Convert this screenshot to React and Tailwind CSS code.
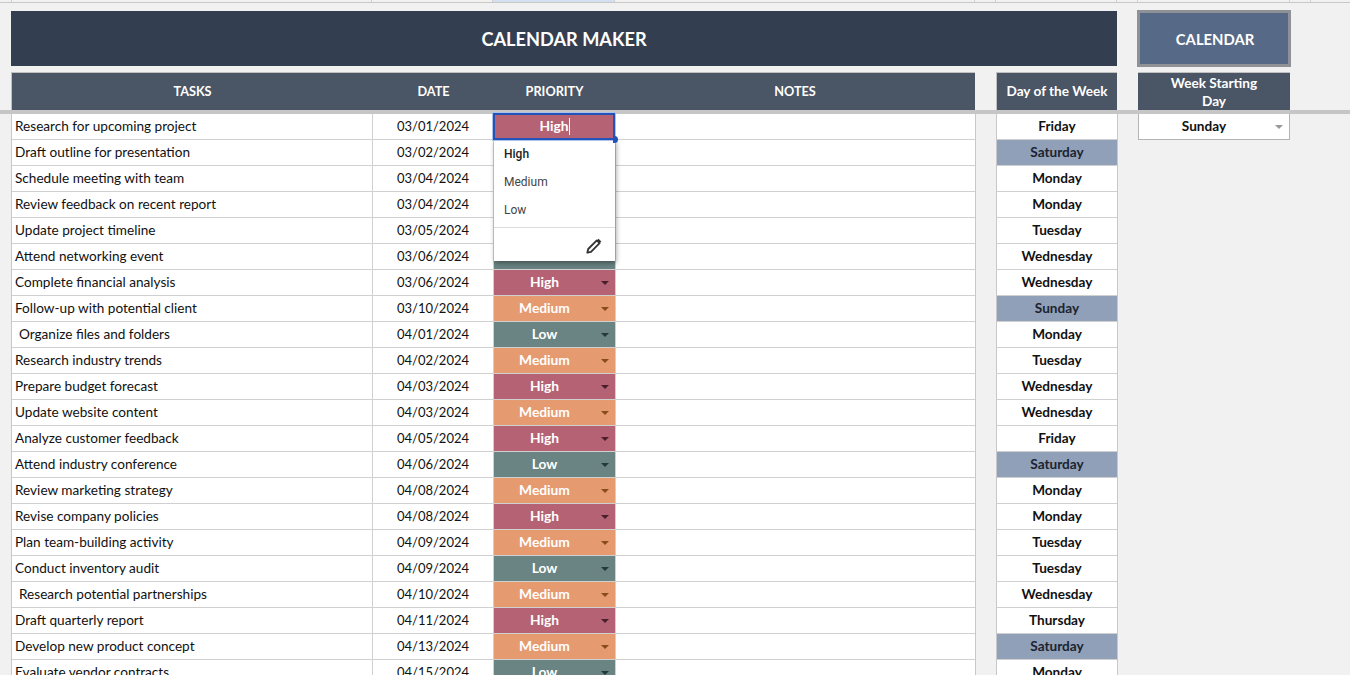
import React from "react";

const rows = [
  ["Research for upcoming project", "03/01/2024", "High", "Friday"],
  ["Draft outline for presentation", "03/02/2024", "Medium", "Saturday"],
  ["Schedule meeting with team", "03/04/2024", "High", "Monday"],
  ["Review feedback on recent report", "03/04/2024", "Low", "Monday"],
  ["Update project timeline", "03/05/2024", "High", "Tuesday"],
  ["Attend networking event", "03/06/2024", "Low", "Wednesday"],
  ["Complete financial analysis", "03/06/2024", "High", "Wednesday"],
  ["Follow-up with potential client", "03/10/2024", "Medium", "Sunday"],
  ["Organize files and folders", "04/01/2024", "Low", "Monday", true],
  ["Research industry trends", "04/02/2024", "Medium", "Tuesday"],
  ["Prepare budget forecast", "04/03/2024", "High", "Wednesday"],
  ["Update website content", "04/03/2024", "Medium", "Wednesday"],
  ["Analyze customer feedback", "04/05/2024", "High", "Friday"],
  ["Attend industry conference", "04/06/2024", "Low", "Saturday"],
  ["Review marketing strategy", "04/08/2024", "Medium", "Monday"],
  ["Revise company policies", "04/08/2024", "High", "Monday"],
  ["Plan team-building activity", "04/09/2024", "Medium", "Tuesday"],
  ["Conduct inventory audit", "04/09/2024", "Low", "Tuesday"],
  ["Research potential partnerships", "04/10/2024", "Medium", "Wednesday", true],
  ["Draft quarterly report", "04/11/2024", "High", "Thursday"],
  ["Develop new product concept", "04/13/2024", "Medium", "Saturday"],
  ["Evaluate vendor contracts", "04/15/2024", "Low", "Monday"],
];

const chipColor = {
  High: "bg-[#b56274]",
  Medium: "bg-[#e59a70]",
  Low: "bg-[#6a8483]",
};

const arrowColor = {
  High: "border-t-[#4a1f2a]",
  Medium: "border-t-[#8a4a20]",
  Low: "border-t-[#26393a]",
};

function Chip({ value, covered }) {
  return (
    <div className={`relative h-full w-[121px] flex items-center justify-center pr-[20px] pb-[1px] text-[13.8px] font-bold text-white ${chipColor[value]}`}>
      {!covered && value}
      <span className={`absolute right-[6px] top-[11px] w-0 h-0 border-x-[4px] border-x-transparent border-t-[4px] ${arrowColor[value]}`} />
    </div>
  );
}

function PencilIcon() {
  return (
    <svg width="16" height="16" viewBox="0 0 16 16" fill="none">
      <path d="M1.3 14.7 2.2 11 10.8 2.4 13.6 5.2 5 13.8Z" stroke="#333" strokeWidth="1.8" strokeLinejoin="round" />
      <path d="M10.8 2.4 12.6.7 15.3 3.4 13.6 5.2Z" fill="#333" />
    </svg>
  );
}

function Dropdown() {
  return (
    <div className="absolute left-[-1px] top-[-1px] z-10 w-[122px]">
      <div className="relative h-[27px] border-2 border-[#2353b8] bg-[#b56274] flex items-center justify-center pl-[1px] pb-[1px] text-[13.8px] font-bold text-white outline outline-1 outline-[#a9c3ea]">
        <span>High</span>
        <span className="w-px h-[17px] bg-white" />
        <span className="absolute right-[-5px] bottom-[-5px] w-[5px] h-[7px] rounded-r-full bg-[#2353b8]" />
      </div>
      <div className="ml-[1px] bg-white text-[12px] text-[#444] shadow-[1px_2px_5px_rgba(0,0,0,0.4)] font-['Roboto',sans-serif]">
        <div className="h-[28px] pl-[10px] flex items-center font-medium text-[#222]">High</div>
        <div className="h-[28px] pl-[10px] flex items-center">Medium</div>
        <div className="h-[28px] pl-[10px] flex items-center">Low</div>
        <div className="mt-[3px] border-t border-[#dcdcdc] h-[34px] flex items-center justify-end pr-[13px] pt-[2px]">
          <PencilIcon />
        </div>
      </div>
    </div>
  );
}

function App() {
  return (
    <div className="w-[1350px] h-[675px] overflow-hidden bg-[#f1f1f1] text-[13.6px] text-[#111] font-['Lato','Liberation_Sans',sans-serif]">
      {/* sheet column ticks at the top */}
      <div className="flex h-[3px] border-b border-[#c8c8c4]">
        <div className="w-[12px] border-r border-[#d0d0d0]" />
        <div className="w-[360px] border-r border-[#d0d0d0]" />
        <div className="w-[121px] border-r border-[#d0d0d0]" />
        <div className="w-[122px] bg-[#d3e0f2] border-r border-[#d0d0d0]" />
        <div className="w-[360px] border-r border-[#d0d0d0]" />
        <div className="w-[21px] border-r border-[#d0d0d0]" />
        <div className="w-[121px] border-r border-[#d0d0d0]" />
        <div className="w-[21px] border-r border-[#d0d0d0]" />
        <div className="w-[152px] border-r border-[#d0d0d0]" />
        <div className="w-[21px] border-r border-[#d0d0d0]" />
      </div>

      {/* title row */}
      <div className="flex items-center pl-[11px] h-[57px] mt-[7px]">
        <div className="w-[1106px] h-[55px] bg-[#333f50] flex items-center justify-center pt-[3px] text-white text-[18.2px] font-bold">
          CALENDAR MAKER
        </div>
        <div className="ml-[20px] w-[154px] h-[57px] bg-[#566a87] border-[3px] border-[#8e9196] flex items-center justify-center pl-[2px] pt-[1px] text-white text-[14.8px] font-bold">
          CALENDAR
        </div>
      </div>

      {/* column headers */}
      <div className="flex pl-[11px] mt-[5px] h-[38px] text-white font-bold text-[12.7px]">
        <div className="w-[964px] flex items-center bg-[#4a5565] border-t border-l border-[#c0c0c0]">
          <div className="w-[361px] text-center">TASKS</div>
          <div className="w-[121px] text-center">DATE</div>
          <div className="w-[121px] text-center">PRIORITY</div>
          <div className="flex-1 text-center">NOTES</div>
        </div>
        <div className="ml-[21px] w-[121px] flex items-center justify-center bg-[#4a5565] border-t border-l border-[#c0c0c0] text-[13.6px]">
          Day of the Week
        </div>
        <div className="ml-[21px] w-[152px] flex items-center justify-center text-center leading-[18px] bg-[#4a5565] border-t border-[#c0c0c0] text-[13.6px]">
          Week Starting<br />Day
        </div>
      </div>

      {/* frozen pane line */}
      <div className="h-[4px] bg-[#c6c6c6]" />

      <div className="flex pl-[11px] items-start">
        <div className="w-[965px] border-x border-[#c8c8c8]">
          {rows.map((r, i) => (
            <div key={i} className="flex h-[26px] bg-white border-b border-[#d0d0d0]">
              <div className={`w-[361px] flex items-center pb-[1px] border-r border-[#d0d0d0] ${r[4] ? "pl-[7px]" : "pl-[3px]"}`}>{r[0]}</div>
              <div className="w-[120px] flex items-center justify-center text-[13px]">{r[1]}</div>
              <div className="relative w-[122px] border-l border-[#d0d0d0]">
                {i === 0 ? <Dropdown /> : <Chip value={r[2]} covered={i < 6} />}
              </div>
              <div className="flex-1 border-l border-[#d0d0d0]" />
            </div>
          ))}
        </div>

        <div className="ml-[20px] w-[122px] border-x border-[#c8c8c8] font-bold">
          {rows.map((r, i) => (
            <div
              key={i}
              className={`h-[26px] flex items-center justify-center pb-[1px] border-b border-[#d0d0d0] ${
                r[3] === "Saturday" || r[3] === "Sunday" ? "bg-[#8fa0b8] text-[#1c2430]" : "bg-white"
              }`}
            >
              {r[3]}
            </div>
          ))}
        </div>

        <div className="relative ml-[20px] w-[152px] h-[26px] bg-white border-x border-b border-[#b4b4b4] flex items-center justify-center pr-[20px] pb-[1px] font-bold">
          Sunday
          <span className="absolute right-[6px] top-[11px] w-0 h-0 border-x-[4px] border-x-transparent border-t-[4px] border-t-[#999]" />
        </div>
      </div>
    </div>
  );
}

export default App;
